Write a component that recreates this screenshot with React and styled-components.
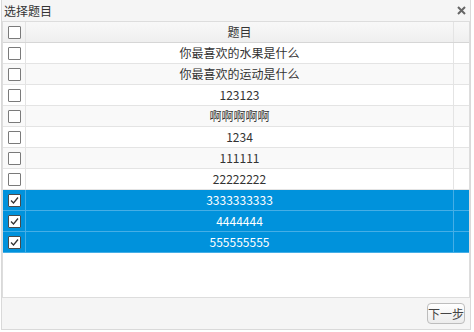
import styled, { createGlobalStyle } from "styled-components";

const GlobalStyle = createGlobalStyle`
  body {
    margin: 0;
    background: #ffffff;
    font-family: "Noto Sans CJK SC", "Noto Sans", sans-serif;
  }
`;

const Dialog = styled.div`
  display: flex;
  flex-direction: column;
  width: 470px;
  height: 330px;
  margin-left: 1px;
  box-sizing: border-box;
  border: 1px solid #d9d9d9;
  border-top: none;
  background: #f5f5f5;
`;

const TitleBar = styled.div`
  display: flex;
  align-items: center;
  justify-content: space-between;
  height: 21px;
  padding: 0 3px 1px 2px;
  box-sizing: border-box;
  font-size: 12px;
  color: #333;
`;

const Close = styled.button`
  display: flex;
  align-items: center;
  justify-content: center;
  width: 12px;
  height: 12px;
  padding: 0;
  border: none;
  background: transparent;
  cursor: pointer;
`;

const Body = styled.div`
  flex: 1;
  margin: 0;
  background: #ffffff;
  border: 1px solid #dddddd;
  border-bottom: none;
  overflow: hidden;
`;

const Row = styled.div`
  display: grid;
  grid-template-columns: 23px 428px 1fr;
  height: 21px;
  box-sizing: border-box;
  border-bottom: 1px solid ${(p) => (p.$selected ? "#45aee6" : "#e4e4e4")};
  background: ${(p) =>
    p.$header ? "linear-gradient(#f8f8f8, #efefef)" : p.$selected ? "#0092dc" : p.$striped ? "#f9f9f9" : "#ffffff"};
  color: ${(p) => (p.$selected ? "#ffffff" : "#333333")};
  font-size: 12px;
  ${(p) => p.$header && "border-bottom-color: #d6d6d6;"}
`;

const Cell = styled.div`
  display: flex;
  align-items: center;
  justify-content: center;
  border-right: 1px solid ${(p) => (p.$selected ? "#45aee6" : "#e4e4e4")};
  line-height: 1;
`;

const Filler = styled.div``;

const Box = styled.span`
  display: flex;
  align-items: center;
  justify-content: center;
  width: 13px;
  height: 13px;
  box-sizing: border-box;
  border: 1px solid ${(p) => (p.$checked ? "#4a4a4a" : "#7a7a7a")};
  background: #ffffff;
  border-radius: 1px;
`;

const Footer = styled.div`
  display: flex;
  justify-content: flex-end;
  align-items: flex-start;
  height: 32px;
  box-sizing: border-box;
  padding: 5px 5px 0 0;
  border-top: 1px solid #dddddd;
  background: #f5f5f5;
`;

const Button = styled.button`
  width: 38px;
  height: 21px;
  padding: 0;
  border: 1px solid #bdbdbd;
  border-radius: 4px;
  background: linear-gradient(#ffffff, #ececec);
  font-family: "Noto Sans CJK SC", sans-serif;
  font-size: 12px;
  color: #444;
  cursor: pointer;
`;

const rows = [
  { text: "你最喜欢的水果是什么" },
  { text: "你最喜欢的运动是什么" },
  { text: "123123" },
  { text: "啊啊啊啊啊" },
  { text: "1234" },
  { text: "111111" },
  { text: "22222222" },
  { text: "3333333333", checked: true },
  { text: "4444444", checked: true },
  { text: "555555555", checked: true },
];

function Check({ checked }) {
  return (
    <Box $checked={checked}>
      {checked && (
        <svg width="9" height="9" viewBox="0 0 9 9">
          <path d="M1 4.5 L3.5 7 L8 1.5" fill="none" stroke="#333" strokeWidth="1.3" />
        </svg>
      )}
    </Box>
  );
}

export default function App() {
  return (
    <>
      <GlobalStyle />
      <Dialog>
        <TitleBar>
          <span>选择题目</span>
          <Close aria-label="close">
            <svg width="9" height="9" viewBox="0 0 9 9">
              <path d="M1 1 L8 8 M8 1 L1 8" stroke="#666" strokeWidth="2" />
            </svg>
          </Close>
        </TitleBar>
        <Body>
          <Row $header>
            <Cell>
              <Check />
            </Cell>
            <Cell>题目</Cell>
            <Filler />
          </Row>
          {rows.map((r, i) => (
            <Row key={i} $striped={i % 2 === 1} $selected={r.checked}>
              <Cell $selected={r.checked}>
                <Check checked={r.checked} />
              </Cell>
              <Cell $selected={r.checked}>{r.text}</Cell>
              <Filler />
            </Row>
          ))}
        </Body>
        <Footer>
          <Button>下一步</Button>
        </Footer>
      </Dialog>
    </>
  );
}
